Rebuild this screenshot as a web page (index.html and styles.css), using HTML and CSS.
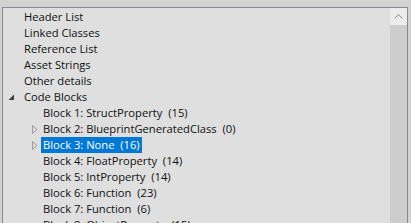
FILE: index.html
```html
<!DOCTYPE html>
<html lang="en">
<head>
  <meta charset="UTF-8" />
  <title>Asset tree</title>
  <link rel="stylesheet" href="styles.css">
</head>
<body>
  <div class="tree">
    <ul class="nodes">
      <li class="node"><span class="label">Header List</span></li>
      <li class="node"><span class="label">Linked Classes</span></li>
      <li class="node"><span class="label">Reference List</span></li>
      <li class="node"><span class="label">Asset Strings</span></li>
      <li class="node"><span class="label">Other details</span></li>
      <li class="node">
        <span class="toggle open">
          <svg width="7" height="7" viewBox="0 0 7 7"><path d="M6 0.5 L6 6 L0.5 6 Z" fill="#404040"/></svg>
        </span>
        <span class="label">Code Blocks</span>
      </li>
      <li class="node child"><span class="label">Block 1: StructProperty&nbsp; (15)</span></li>
      <li class="node child">
        <span class="toggle">
          <svg width="6" height="9" viewBox="0 0 6 9"><path d="M0.5 0.5 L5 4.5 L0.5 8.5 Z" fill="none" stroke="#9a9a9a"/></svg>
        </span>
        <span class="label">Block 2: BlueprintGeneratedClass&nbsp; (0)</span>
      </li>
      <li class="node child">
        <span class="toggle">
          <svg width="6" height="9" viewBox="0 0 6 9"><path d="M0.5 0.5 L5 4.5 L0.5 8.5 Z" fill="none" stroke="#9a9a9a"/></svg>
        </span>
        <span class="label selected">Block 3: None&nbsp; (16)</span>
      </li>
      <li class="node child"><span class="label">Block 4: FloatProperty&nbsp; (14)</span></li>
      <li class="node child"><span class="label">Block 5: IntProperty&nbsp; (14)</span></li>
      <li class="node child"><span class="label">Block 6: Function&nbsp; (23)</span></li>
      <li class="node child"><span class="label">Block 7: Function&nbsp; (6)</span></li>
      <li class="node child"><span class="label">Block 8: ObjectProperty&nbsp; (15)</span></li>
    </ul>
    <div class="scrollbar">
      <div class="scroll-up">
        <svg width="9" height="5" viewBox="0 0 9 5"><path d="M0.5 4.5 L4.5 0.8 L8.5 4.5" fill="none" stroke="#8a8a8a"/></svg>
      </div>
    </div>
  </div>
</body>
</html>
```

FILE: styles.css
```css
body {
  margin: 0;
  background: #d2d2d2;
  font-family: "Open Sans", "Noto Sans", sans-serif;
  font-size: 11.2px;
  color: #101010;
  height: 223px;
  overflow: hidden;
}

.tree {
  margin: 7px 3px 0 2px;
  height: 260px;
  border: 1px solid #868a91;
  background: #dfdfdf;
  display: grid;
  grid-template-columns: 1fr 17px;
}

.nodes {
  list-style: none;
  margin: 0;
  padding: 1px 0 0 0;
}

.node {
  position: relative;
  height: 16px;
  line-height: 16px;
  padding-left: 19px;
  white-space: nowrap;
}

.node.child {
  padding-left: 38px;
}

.label {
  display: inline-block;
  padding: 0 2px;
  height: 16px;
}

.label.selected {
  background: #0078d7;
  color: white;
}

.toggle {
  position: absolute;
  top: 0;
  height: 16px;
  display: flex;
  align-items: center;
}

.toggle.open {
  left: 5px;
}

.child .toggle {
  left: 29px;
}

.scrollbar {
  background: #cdcdcd;
}

.scroll-up {
  height: 17px;
  background: #ececec;
  display: flex;
  align-items: center;
  justify-content: center;
}
```
